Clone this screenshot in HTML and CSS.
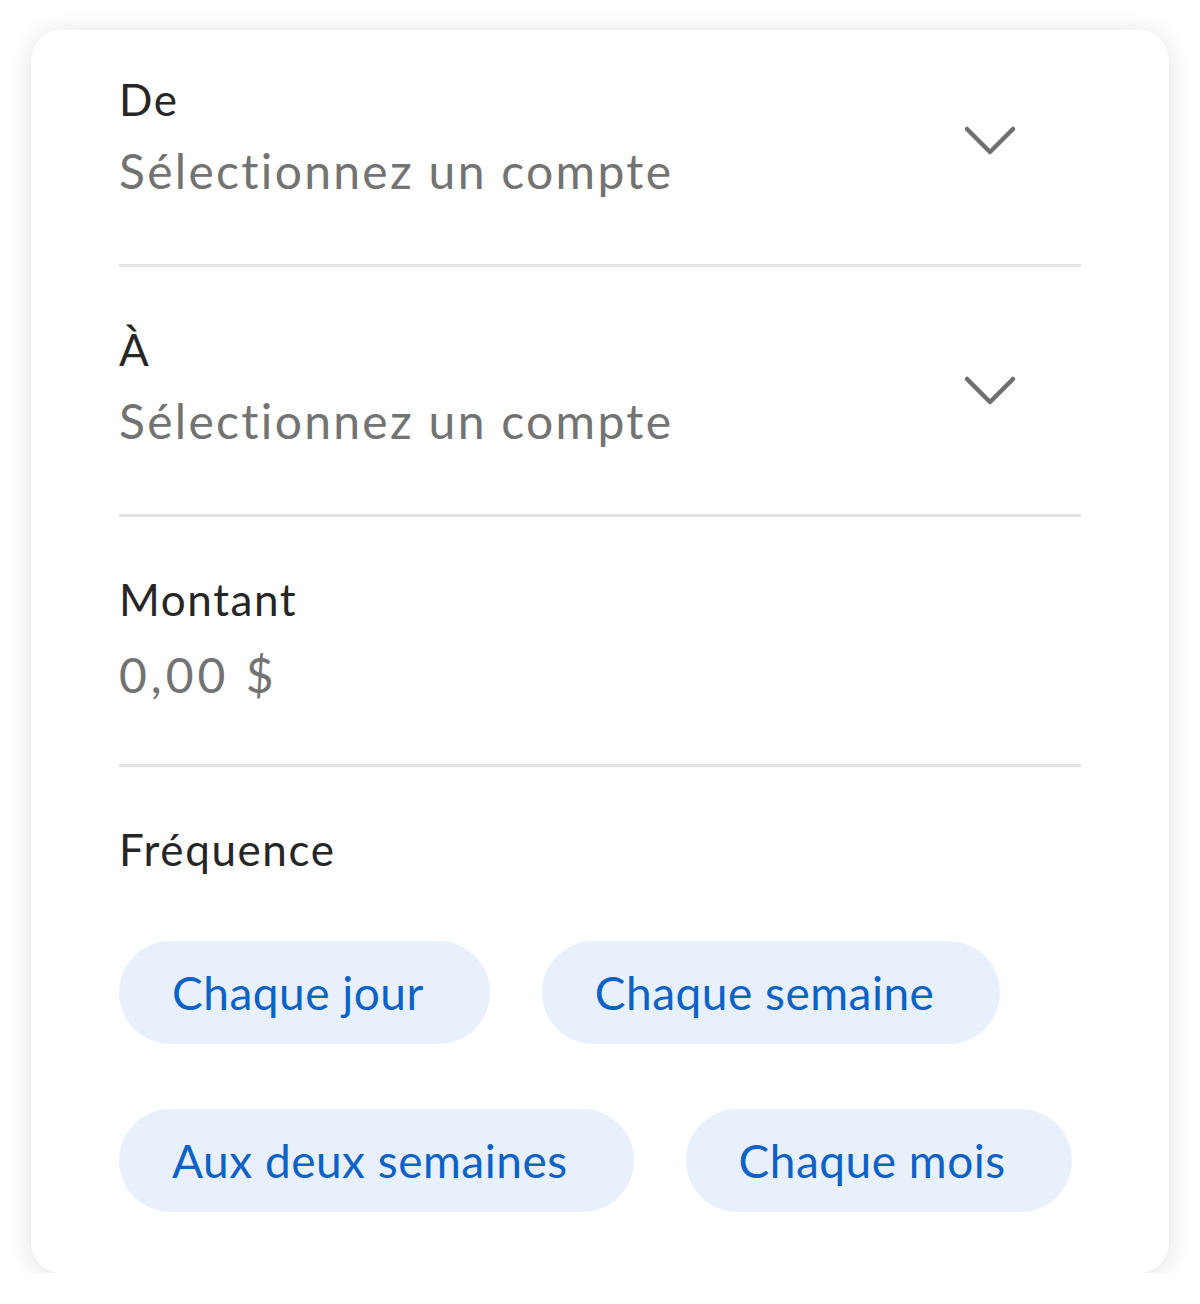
FILE: index.html
```html
<!DOCTYPE html>
<html lang="fr">
<head>
    <meta charset="UTF-8">
    <meta name="viewport" content="width=device-width, initial-scale=1.0">
    <title>Virement</title>
    <link rel="stylesheet" href="styles.css">
</head>
<body>
    <main class="transfer-card">
        <!-- Compte source -->
        <div class="field">
            <div class="field-text">
                <div class="field-label">De</div>
                <div class="field-value">Sélectionnez un compte</div>
            </div>
            <svg class="chevron" width="56" height="32" viewBox="0 0 56 32" aria-hidden="true">
                <path d="M5 4 L28 27 L51 4" fill="none" stroke="#6e6e6e" stroke-width="4.5" stroke-linecap="round" stroke-linejoin="round"/>
            </svg>
        </div>

        <!-- Compte destination -->
        <div class="field">
            <div class="field-text">
                <div class="field-label">À</div>
                <div class="field-value">Sélectionnez un compte</div>
            </div>
            <svg class="chevron" width="56" height="32" viewBox="0 0 56 32" aria-hidden="true">
                <path d="M5 4 L28 27 L51 4" fill="none" stroke="#6e6e6e" stroke-width="4.5" stroke-linecap="round" stroke-linejoin="round"/>
            </svg>
        </div>

        <!-- Montant -->
        <div class="field">
            <div class="field-text">
                <div class="field-label">Montant</div>
                <div class="field-value amount">0,00 $</div>
            </div>
        </div>

        <!-- Fréquence -->
        <div class="frequency">
            <div class="field-label">Fréquence</div>
            <div class="chips">
                <button class="chip" type="button">Chaque jour</button>
                <button class="chip" type="button">Chaque semaine</button>
                <button class="chip" type="button">Aux deux semaines</button>
                <button class="chip" type="button">Chaque mois</button>
            </div>
        </div>
    </main>
</body>
</html>
```

FILE: styles.css
```css
body {
  margin: 0;
  padding: 0;
  background: #fff;
  font-family: Lato, "Open Sans", sans-serif;
  color: #222;
}

.transfer-card {
  width: 1138px;
  height: 1243px;
  box-sizing: border-box;
  margin: 30px 0 0 31px;
  padding: 0 88px;
  background: #fff;
  border-radius: 30px;
  box-shadow: 0 3px 24px rgba(0, 0, 0, 0.12);
}

.field {
  display: flex;
  align-items: flex-start;
  justify-content: space-between;
  height: 250px;
  box-sizing: border-box;
  padding-top: 56px;
  border-bottom: 3px solid #e3e3e3;
}

.field:first-child {
  height: 237px;
  padding-top: 43px;
}

.field-label {
  font-size: 44px;
  line-height: 52px;
  letter-spacing: 1.6px;
  color: #262626;
}

.field-value {
  margin-top: 18px;
  font-size: 48px;
  line-height: 56px;
  letter-spacing: 2.3px;
  color: #737373;
}

.field-value.amount {
  margin-top: 22px;
  letter-spacing: 4px;
}

.chevron {
  margin-top: 52px;
  margin-right: 63px;
}

.frequency {
  padding-top: 56px;
}

.chips {
  display: flex;
  flex-wrap: wrap;
  column-gap: 52px;
  row-gap: 65px;
  margin-top: 66px;
}

.chip {
  height: 103px;
  padding: 0 66px 0 53px;
  border: none;
  border-radius: 52px;
  background: #e8f1fb;
  color: #0c62c6;
  font-family: inherit;
  font-size: 46px;
  letter-spacing: 0.5px;
  white-space: nowrap;
  cursor: pointer;
}
```
